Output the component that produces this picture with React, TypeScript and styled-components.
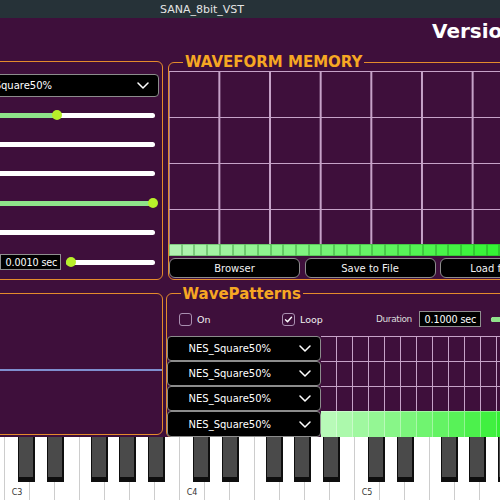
import styled, { createGlobalStyle } from "styled-components";

const PURPLE = "#3e0f3b";
const ORANGE = "#e48b2c";
const GOLD = "#f6a723";
const GRID = "#c6a2c8";
const GREEN = "#8fe38a";
const KNOB = "#b8f02a";

const GlobalStyle = createGlobalStyle`
  html, body {
    margin: 0;
    padding: 0;
    background: ${PURPLE};
  }
  body {
    font-family: "DejaVu Sans", "Liberation Sans", sans-serif;
  }
  * {
    box-sizing: border-box;
  }
`;

const Window = styled.div`
  width: 500px;
  height: 500px;
  overflow: hidden;
  display: flex;
  flex-direction: column;
`;

const TitleBar = styled.div`
  flex: none;
  height: 18px;
  background: #263238;
  color: #e4e4e4;
  font-size: 11px;
  display: flex;
  align-items: center;
  padding-left: 160px;
`;

const Main = styled.main`
  flex: none;
  height: 419px;
  background: ${PURPLE};
  overflow: hidden;
`;

const Stage = styled.div`
  margin-left: -58px;
  width: 650px;
  display: grid;
  grid-template-columns: 221px 420px;
  grid-template-rows: 31.5px auto auto;
  column-gap: 2.5px;
  row-gap: 3.5px;
`;

const Header = styled.div`
  grid-column: 1 / -1;
  padding: 1px 0 0 490px;
  font-size: 20px;
  font-weight: bold;
  line-height: 24px;
  color: #fff;
  white-space: nowrap;
`;

const SidePanel = styled.section<{ $height?: number; $top?: number }>`
  margin-top: ${({ $top }) => $top ?? 8.25}px;
  height: ${({ $height }) => ($height ? `${$height}px` : "auto")};
  border: 1.5px solid ${ORANGE};
  border-radius: 6px;
  padding: 11.25px 3px 0 4.5px;
  display: flex;
  flex-direction: column;
`;

const SliderStack = styled.div`
  margin-top: 4px;
  display: flex;
  flex-direction: column;
`;

const Group = styled.fieldset<{ $shift?: number; $top?: number; $width: number }>`
  margin: ${({ $top }) => $top ?? 0}px 0 0 ${({ $shift }) => $shift ?? 0}px;
  width: ${({ $width }) => $width}px;
  min-width: 0;
  padding: 0 0 0.5px;
  border: 1.5px solid ${ORANGE};
  border-radius: 6px;
`;

const Legend = styled.legend`
  margin-left: 14px;
  padding: 0 2px;
  font-size: 15px;
  font-weight: bold;
  line-height: 18px;
  color: ${GOLD};
`;

const Select = styled.div<{ $height?: number; $width?: number }>`
  flex: none;
  height: ${({ $height }) => ($height ? `${$height}px` : "100%")};
  width: ${({ $width }) => ($width ? `${$width}px` : "auto")};
  display: flex;
  align-items: center;
  justify-content: space-between;
  padding: 0 9px 0 21px;
  background: #000;
  border: 1px solid #8c8c8c;
  border-radius: 4px;
  color: #fff;
  font-size: 10px;
  white-space: nowrap;
`;

const SliderRow = styled.div<{ $indent?: number }>`
  height: 29.4px;
  display: flex;
  align-items: center;
  padding: 0 4.5px 0 ${({ $indent }) => $indent ?? 0}px;
`;

const InlineSlider = styled.div`
  flex: 1;
  height: 16px;
  display: flex;
  align-items: center;
  padding-left: 5.5px;
`;

const Track = styled.div`
  position: relative;
  flex: 1;
  height: 5px;
  border-radius: 3px;
  background: #fff;
`;

const Fill = styled.div`
  position: absolute;
  left: 0;
  top: 0;
  bottom: 0;
  border-radius: 3px;
  background: ${GREEN};
`;

const Knob = styled.div`
  position: absolute;
  top: 50%;
  width: 10px;
  height: 10px;
  border-radius: 50%;
  background: ${KNOB};
  transform: translate(-50%, -50%);
`;

const ValueBox = styled.div<{ $width: number }>`
  flex: none;
  width: ${({ $width }) => $width}px;
  height: 16px;
  margin-right: 4.5px;
  display: flex;
  align-items: center;
  padding-left: 4.5px;
  background: #000;
  border: 1px solid #8f8f8f;
  color: #fff;
  font-size: 9.6px;
  letter-spacing: -0.1px;
  white-space: nowrap;
  overflow: hidden;
`;

const WaveGrid = styled.div`
  height: 173px;
  background-image: linear-gradient(to right, ${GRID} 1.5px, transparent 1.5px),
    linear-gradient(to bottom, ${GRID} 1.5px, transparent 1.5px);
  background-size: 50.67px 46px;
  background-position: -1.3px 0;
`;

const MemoryBar = styled.div`
  height: 12px;
  display: flex;
`;

const MemoryCell = styled.div`
  flex: 1;
  box-shadow: inset 0 0 0 0.75px rgba(30, 120, 30, 0.45);
`;

const ButtonRow = styled.div`
  display: flex;
  gap: 4.5px;
  height: 20px;
  margin-top: 2px;
`;

const Button = styled.button`
  flex: none;
  width: 131px;
  padding: 0;
  background: #000;
  border: 1px solid #8d8d8d;
  border-radius: 6px;
  color: #f2f2f2;
  font-family: inherit;
  font-size: 10px;
  white-space: nowrap;
`;

const Scope = styled.div`
  margin: 64px -3px 0 -4.5px;
  height: 1.5px;
  background: #7f8fcf;
`;

const CheckRow = styled.div`
  height: 33px;
  display: flex;
  align-items: center;
  padding-left: 12.5px;
`;

const CheckItem = styled.label<{ $width: number }>`
  flex: none;
  width: ${({ $width }) => $width}px;
  display: flex;
  align-items: center;
  gap: 5px;
  color: #f0f0f0;
  font-size: 9.5px;
`;

const CheckBox = styled.span`
  width: 13px;
  height: 13px;
  border: 1px solid #a98fb0;
  border-radius: 3px;
  display: flex;
  align-items: center;
  justify-content: center;
`;

const FieldLabel = styled.span`
  flex: none;
  width: 43px;
  color: #dcdcdc;
  font-size: 9px;
  letter-spacing: -0.4px;
`;

const PatternRow = styled.div`
  height: 25.3px;
  display: flex;
`;

const StepCell = styled.div<{ $bg?: string }>`
  flex: none;
  width: 16px;
  height: 100%;
  background: ${({ $bg }) => $bg ?? "transparent"};
  border-top: 1.5px solid ${({ $bg }) => ($bg ? "rgba(255,255,255,0.35)" : GRID)};
  border-right: 1.5px solid ${({ $bg }) => ($bg ? "rgba(255,255,255,0.35)" : GRID)};
`;

const Keyboard = styled.div`
  flex: none;
  position: relative;
  height: 63px;
  margin-left: -20px;
  display: flex;
  background: #fff;
`;

const WhiteKey = styled.div`
  flex: none;
  width: 25px;
  height: 100%;
  border-right: 1px solid #cdcdcd;
  display: flex;
  align-items: flex-end;
  justify-content: center;
  padding-bottom: 2px;
  font-size: 8px;
  line-height: 10px;
  color: #333;
`;

const BlackKey = styled.div`
  position: absolute;
  top: 0;
  width: 17px;
  height: 45px;
  background: #4a4a4a;
  border: solid #0e0e0e;
  border-width: 0 2px 5px 1.5px;
`;

function Chevron() {
  return (
    <svg width="12" height="7" viewBox="0 0 12 7">
      <path
        d="M1 1l5 5 5-5"
        fill="none"
        stroke="#fff"
        strokeWidth="1.5"
        strokeLinecap="round"
        strokeLinejoin="round"
      />
    </svg>
  );
}

function Tick() {
  return (
    <svg width="9" height="9" viewBox="0 0 9 9">
      <path
        d="M1.5 4.8l2 2 4-4.6"
        fill="none"
        stroke="#fff"
        strokeWidth="1.4"
        strokeLinecap="round"
        strokeLinejoin="round"
      />
    </svg>
  );
}

function Slider({ value }: { value: number }) {
  return (
    <Track>
      <Fill style={{ width: `${value * 100}%` }} />
      <Knob style={{ left: `${value * 100}%` }} />
    </Track>
  );
}

const sliderValues = [0.53, 0, 0, 0.993, 0];
const memory = Array.from({ length: 32 }, (_, i) => {
  const v = Math.max(50, 178 - 5 * i);
  return `rgb(${v}, 243, ${v})`;
});
const stepGreens = Array.from({ length: 16 }, (_, i) => {
  const v = Math.max(50, 184 - 12 * i);
  return `rgb(${v}, ${250 - i}, ${v})`;
});

const whiteNames = ["B", "C", "D", "E", "F", "G", "A"];
const blackOffsets = [13, 41.5, 86, 114, 142.5];

export default function App() {
  return (
    <>
      <GlobalStyle />
      <Window>
        <TitleBar>SANA_8bit_VST</TitleBar>
        <Main>
          <Stage>
            <Header>Version 1.0.0</Header>

            <SidePanel>
              <Select $height={23}>
                <span>NES_Square50%</span>
                <Chevron />
              </Select>
              <SliderStack>
                {sliderValues.map((v, i) => (
                  <SliderRow key={i}>
                    <Slider value={v} />
                  </SliderRow>
                ))}
                <SliderRow $indent={52.5}>
                  <ValueBox $width={61}>0.0010 sec</ValueBox>
                  <Slider value={0.057} />
                </SliderRow>
              </SliderStack>
            </SidePanel>

            <Group $shift={2.5} $width={408.3}>
              <Legend>WAVEFORM MEMORY</Legend>
              <WaveGrid />
              <MemoryBar>
                {memory.map((c, i) => (
                  <MemoryCell key={i} style={{ background: c }} />
                ))}
              </MemoryBar>
              <ButtonRow>
                <Button>Browser</Button>
                <Button>Save to File</Button>
                <Button>Load from File</Button>
              </ButtonRow>
            </Group>

            <SidePanel $height={141.75} $top={9.75}>
              <Scope />
            </SidePanel>

            <Group $width={411} $top={1.5}>
              <Legend>WavePatterns</Legend>
              <CheckRow>
                <CheckItem $width={103}>
                  <CheckBox />
                  On
                </CheckItem>
                <CheckItem $width={94}>
                  <CheckBox>
                    <Tick />
                  </CheckBox>
                  Loop
                </CheckItem>
                <FieldLabel>Duration</FieldLabel>
                <ValueBox $width={62}>0.1000 sec</ValueBox>
                <InlineSlider>
                  <Slider value={0.9} />
                </InlineSlider>
              </CheckRow>
              {[0, 1, 2, 3].map((row) => (
                <PatternRow key={row}>
                  <Select $width={154}>
                    <span>NES_Square50%</span>
                    <Chevron />
                  </Select>
                  {stepGreens.map((g, i) => (
                    <StepCell key={i} $bg={row === 3 ? g : undefined} />
                  ))}
                </PatternRow>
              ))}
            </Group>
          </Stage>
        </Main>

        <Keyboard>
          {Array.from({ length: 21 }, (_, i) => {
            const name = whiteNames[i % 7];
            const octave = Math.floor((i + 6) / 7) + 2;
            return <WhiteKey key={i}>{name === "C" ? `C${octave}` : ""}</WhiteKey>;
          })}
          {[0, 1, 2].flatMap((oct) =>
            blackOffsets.map((off, j) => (
              <BlackKey key={`${oct}-${j}`} style={{ left: 25 + 175 * oct + off }} />
            ))
          )}
        </Keyboard>
      </Window>
    </>
  );
}
